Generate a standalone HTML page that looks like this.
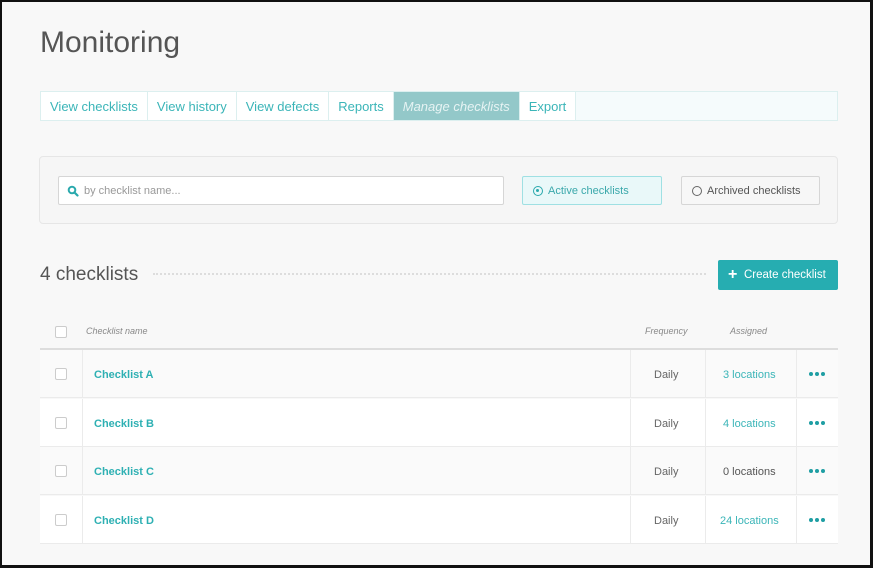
<!DOCTYPE html>
<html><head><style>
*{box-sizing:border-box;margin:0;padding:0}
body{width:873px;height:568px;background:#fff;font-family:"Liberation Sans",sans-serif;position:relative;overflow:hidden}
.frame{position:absolute;left:0;top:0;width:873px;height:568px;border:2px solid #111;border-right-width:3px;border-bottom-width:3px;background:#f8f8f8}
.a{position:absolute}
h1{position:absolute;left:40px;top:26px;font-size:30px;font-weight:normal;color:#555}
.tabs{left:40px;top:91px;width:798px;height:30px;border:1px solid #dcefef;background:#f5fbfc;display:flex}
.tab{height:28px;line-height:29px;padding:0 9px;font-size:13px;color:#3bb5b8;background:#fff;border-right:1px solid #dcefef}
.tab.on{background:#93c8c9;font-style:italic;color:#e6f3f3}
.filter{left:39px;top:156px;width:799px;height:68px;border:1px solid #e6e6e6;border-radius:4px;background:#f6f6f6}
.inp{left:58px;top:176px;width:446px;height:29px;border:1px solid #d6d6d6;border-radius:2px;background:#fff;font-size:11px;color:#999;line-height:29px;padding-left:25px}
.btn{top:176px;height:29px;border:1px solid #d6d6d6;border-radius:2px;font-size:11px;line-height:29px;padding-left:25px;color:#555;background:#f7f7f7}
.rad{position:absolute;left:10px;top:9px;width:10px;height:10px;border:1.5px solid #666;border-radius:50%}
.cb{position:absolute;width:12px;height:12px;border:1.5px solid #ccc;border-radius:2px;background:#fff}
.row{position:absolute;left:40px;width:798px;height:48px;border-bottom:1px solid #ebebeb}
.cell{position:absolute;top:1px;height:48px;line-height:48px;font-size:11px}
.vl{position:absolute;top:0;height:48px;width:1px;background:#ebebeb}
.name{left:54px;color:#2eb0b3;font-weight:bold}
.dots{position:absolute;left:769px;top:22px;width:24px;height:4px;white-space:nowrap;line-height:4px;font-size:0}
.dots i{display:inline-block;width:4px;height:4px;border-radius:50%;background:#1e9ea3;margin-right:2px;vertical-align:top}
</style></head><body>
<div class="frame"></div>
<h1>Monitoring</h1>
<div class="a tabs">
<div class="tab">View checklists</div><div class="tab">View history</div><div class="tab">View defects</div><div class="tab">Reports</div><div class="tab on">Manage checklists</div><div class="tab">Export</div>
</div>
<div class="a filter"></div>
<div class="a inp">by checklist name...
<svg class="a" style="left:8px;top:8px" width="12" height="12" viewBox="0 0 12 12"><circle cx="5" cy="5" r="3.3" fill="none" stroke="#2aa9ad" stroke-width="2"/><line x1="7.5" y1="7.5" x2="10.5" y2="10.5" stroke="#2aa9ad" stroke-width="2.2" stroke-linecap="round"/></svg></div>
<div class="a btn" style="left:522px;width:140px;background:#e9f8f9;border-color:#9fe0e3;color:#3aa8ab"><span class="rad" style="border-color:#2aa9ad"><span style="position:absolute;left:2px;top:2px;width:3px;height:3px;border-radius:50%;background:#2aa9ad"></span></span>Active checklists</div>
<div class="a btn" style="left:681px;width:139px">
<span class="rad"></span>Archived checklists</div>
<div class="a" style="left:40px;top:264px;font-size:19px;color:#555">4 checklists</div>
<div class="a" style="left:153px;top:273px;width:553px;border-top:2px dotted #ddd"></div>
<div class="a" style="left:718px;top:260px;width:120px;height:30px;background:#26adb1;border-radius:2px;color:#fff;font-size:11.5px;line-height:30px;padding-left:26px"><span style="position:absolute;left:10px;top:0;font-size:16px;font-weight:bold">+</span>Create checklist</div>
<div class="cb" style="left:55px;top:326px"></div>
<div class="a" style="left:86px;top:326px;font-size:9px;font-style:italic;color:#888">Checklist name</div>
<div class="a" style="left:645px;top:326px;font-size:9px;font-style:italic;color:#888">Frequency</div>
<div class="a" style="left:730px;top:326px;font-size:9px;font-style:italic;color:#888">Assigned</div>
<div class="a" style="left:40px;top:348px;width:798px;height:2px;background:#ddd"></div>

<div class="row" style="top:350px;background:#fafafa"><div class="cb" style="left:15px;top:18px"></div><div class="vl" style="left:42px"></div><div class="cell name">Checklist A</div><div class="vl" style="left:590px"></div><div class="cell" style="left:614px;color:#666">Daily</div><div class="vl" style="left:665px"></div><div class="cell" style="left:683px;color:#3bb5b8">3 locations</div><div class="vl" style="left:756px"></div><div class="dots"><i></i><i></i><i></i></div></div>
<div class="row" style="top:399px;background:#fff"><div class="cb" style="left:15px;top:18px"></div><div class="vl" style="left:42px"></div><div class="cell name">Checklist B</div><div class="vl" style="left:590px"></div><div class="cell" style="left:614px;color:#666">Daily</div><div class="vl" style="left:665px"></div><div class="cell" style="left:683px;color:#3bb5b8">4 locations</div><div class="vl" style="left:756px"></div><div class="dots"><i></i><i></i><i></i></div></div>
<div class="row" style="top:447px;background:#fafafa"><div class="cb" style="left:15px;top:18px"></div><div class="vl" style="left:42px"></div><div class="cell name">Checklist C</div><div class="vl" style="left:590px"></div><div class="cell" style="left:614px;color:#666">Daily</div><div class="vl" style="left:665px"></div><div class="cell" style="left:683px;color:#555">0 locations</div><div class="vl" style="left:756px"></div><div class="dots"><i></i><i></i><i></i></div></div>
<div class="row" style="top:496px;background:#fff"><div class="cb" style="left:15px;top:18px"></div><div class="vl" style="left:42px"></div><div class="cell name">Checklist D</div><div class="vl" style="left:590px"></div><div class="cell" style="left:614px;color:#666">Daily</div><div class="vl" style="left:665px"></div><div class="cell" style="left:680px;color:#3bb5b8">24 locations</div><div class="vl" style="left:756px"></div><div class="dots"><i></i><i></i><i></i></div></div>
</body></html>
